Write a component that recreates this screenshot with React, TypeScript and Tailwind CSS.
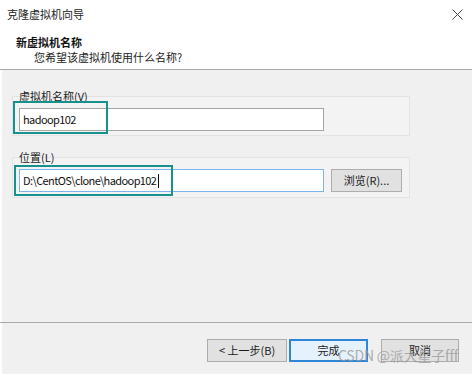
import React from 'react';

const cjk = { fontFamily: '"Noto Sans CJK SC", "Microsoft YaHei", sans-serif' };

const Button: React.FC<{ label: string; primary?: boolean; className?: string }> = ({ label, primary, className }) => (
  <button
    className={
      'h-[23px] flex items-center justify-center text-[11px] text-[#1a1a1a] bg-[#e1e1e1] ' +
      (primary ? 'border-2 border-[#2f86d6] bg-[#e5f1fb] ' : 'border border-[#adadad] ') +
      (className ?? '')
    }
  >
    {label}
  </button>
);

export default function App() {
  return (
    <div className="relative w-[474px] h-[375px] bg-white overflow-hidden select-none" style={cjk}>
      {/* header */}
      <div className="h-[69px] flex flex-col">
        <div className="flex items-center justify-between pl-[7px] pr-[11px] h-[28px]">
          <span className="text-[11px] text-[#222]">克隆虚拟机向导</span>
          <svg width="11" height="11" viewBox="0 0 11 11" className="text-[#444]">
            <path d="M0.5 0.5 L10.5 10.5 M10.5 0.5 L0.5 10.5" stroke="currentColor" strokeWidth="1" fill="none" />
          </svg>
        </div>
        <div className="pl-[16px] mt-[6px] text-[11px] font-bold text-[#111] leading-[16px]">新虚拟机名称</div>
        <div className="pl-[34px] text-[11px] text-[#222] leading-[15px]">您希望该虚拟机使用什么名称?</div>
      </div>

      <div className="h-px w-[472px] bg-[#a9a9a9]" />

      {/* body */}
      <div className="w-[470px] ml-[2px] h-[252px] bg-[#f0f0f0] flex flex-col">
        <div className="mt-[26px] ml-[10px] w-[398px] h-[40px] border border-[#e3e3e3] bg-[#f3f3f3] px-[6px] flex flex-col">
          <div className="-mt-[8px] leading-[14px] text-[11px] text-[#222] w-fit pr-[2px]">虚拟机名称(V)</div>
          <div className="mt-[5px] w-[305px] h-[23px] bg-white border border-[#a5a5a5] flex items-center pl-[3px] text-[11px] tracking-[-0.6px] text-[#111]">
            hadoop102
          </div>
        </div>

        <div className="mt-[21px] ml-[10px] w-[398px] h-[41px] border border-[#e3e3e3] bg-[#f3f3f3] px-[6px] flex flex-col">
          <div className="-mt-[8px] leading-[14px] text-[11px] text-[#222] w-fit pr-[2px]">位置(L)</div>
          <div className="mt-[5px] flex gap-[7px]">
            <div className="w-[305px] h-[23px] bg-white border border-[#7eb4ea] flex items-center pl-[3px] text-[11px] tracking-[-0.6px] text-[#111]">
              D:\CentOS\clone\hadoop102
              <span className="w-px h-[14px] bg-[#111] ml-[2px]" />
            </div>
            <Button label="浏览(R)..." className="w-[71px] h-[23px]" />
          </div>
        </div>
      </div>

      <div className="h-px w-[472px] bg-[#a9a9a9]" />

      {/* footer */}
      <div className="w-[470px] ml-[2px] h-[51px] bg-[#f0f0f0] flex items-start pt-[16px] pl-[205px]">
        <Button label="< 上一步(B)" className="w-[80px]" />
        <Button label="完成" primary className="w-[79px] ml-[2px]" />
        <Button label="取消" className="w-[78px] ml-[13px]" />
      </div>

      {/* annotations */}
      <div className="absolute left-[13px] top-[101px] w-[95px] h-[33px] border-2 border-[#16918c]" />
      <div className="absolute left-[14px] top-[165px] w-[159px] h-[31px] border-2 border-[#16918c]" />
      <div className="absolute left-[338px] top-[347px] text-[14px] leading-[16px] text-[#9a9a9a]/80 tracking-[-0.2px]">
        CSDN @派大星子fff
      </div>
    </div>
  );
}
